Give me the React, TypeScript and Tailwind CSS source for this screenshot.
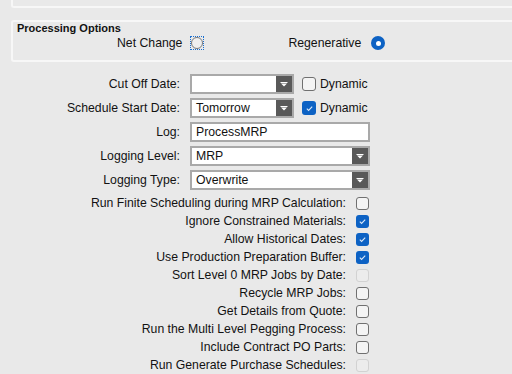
import React from "react";

const ink = "text-[#121212]";

function Caret() {
  return (
    <svg width="8" height="5" viewBox="0 0 8 5">
      <rect x="0.5" y="0" width="7" height="1" fill="#fff" />
      <polygon points="1,1.5 7,1.5 4,4.5" fill="#fff" />
    </svg>
  );
}

function Check({ checked, disabled, size = 13 }: { checked?: boolean; disabled?: boolean; size?: number }) {
  if (checked) {
    return (
      <span
        className="flex items-center justify-center rounded-[3px] bg-[#0d62c4]"
        style={{ width: size, height: size }}
      >
        <svg width="9" height="9" viewBox="0 0 9 9">
          <path d="M1.8 4.6 L3.6 6.4 L7.2 2.6" stroke="#dbe8f8" strokeWidth="1.1" fill="none" />
        </svg>
      </span>
    );
  }
  return (
    <span
      className={
        disabled
          ? "block rounded-[3px] border border-[#d2d2d2] bg-[#ececec]"
          : "block rounded-[3px] border-[1.5px] border-[#707070] bg-[#f4f4f4]"
      }
      style={{ width: size, height: size }}
    />
  );
}

function Select({ value, width }: { value: string; width: number }) {
  return (
    <div
      className="flex h-[20px] items-stretch border-2 border-[#a9a9a9] bg-white"
      style={{ width }}
    >
      <span className="flex-1 pl-[4px] leading-[16px]">{value}</span>
      <span className="flex w-[16px] items-center justify-center bg-[#595959]">
        <Caret />
      </span>
    </div>
  );
}

const checks: { label: string; checked?: boolean; disabled?: boolean }[] = [
  { label: "Run Finite Scheduling during MRP Calculation:" },
  { label: "Ignore Constrained Materials:", checked: true },
  { label: "Allow Historical Dates:", checked: true },
  { label: "Use Production Preparation Buffer:", checked: true },
  { label: "Sort Level 0 MRP Jobs by Date:", disabled: true },
  { label: "Recycle MRP Jobs:" },
  { label: "Get Details from Quote:" },
  { label: "Run the Multi Level Pegging Process:" },
  { label: "Include Contract PO Parts:" },
  { label: "Run Generate Purchase Schedules:", disabled: true },
];

export default function App() {
  return (
    <div
      className={`h-[374px] w-[512px] overflow-hidden bg-[#e9e9e9] ${ink}`}
      style={{ fontFamily: '"Liberation Sans", Arial, sans-serif' }}
    >
      {/* panel above, only its bottom edge shows */}
      <div className="ml-[11px] h-[8px] w-[520px] rounded-bl-[3px] border-b-2 border-l-2 border-[#f7f7f7]" />

      {/* Processing Options */}
      <div className="ml-[11px] mt-[12px] h-[42px] w-[520px] rounded-[3px] border-2 border-[#f7f7f7]">
        <div className="-mt-[1px] pl-[4px] text-[11px] font-bold leading-[14px]">Processing Options</div>
        <div className="flex h-[16px] items-center text-[12.25px]">
          <span className="ml-[104px]">Net Change</span>
          <span className="ml-[8px] flex h-[14px] w-[14px] items-center justify-center border border-dotted border-[#1a6fd0]">
            <span className="block h-[12px] w-[12px] rounded-full border-[1.5px] border-[#7a7a7a] bg-[#efefef]" />
          </span>
          <span className="ml-[84px]">Regenerative</span>
          <span className="ml-[10px] flex h-[14px] w-[14px] items-center justify-center rounded-full bg-[#0d62c4]">
            <span className="block h-[5px] w-[5px] rounded-full bg-white" />
          </span>
        </div>
      </div>

      {/* fields */}
      <div className="mt-[10px] text-[12.25px]">
        <div className="flex h-[24px] items-center">
          <span className="w-[180px] text-right">Cut Off Date:</span>
          <div className="ml-[10px]">
            <Select value="" width={104} />
          </div>
          <span className="ml-[8px]">
            <Check size={14} />
          </span>
          <span className="ml-[4px]">Dynamic</span>
        </div>
        <div className="flex h-[24px] items-center">
          <span className="w-[180px] whitespace-nowrap text-right">Schedule Start Date:</span>
          <div className="ml-[10px]">
            <Select value="Tomorrow" width={104} />
          </div>
          <span className="ml-[8px]">
            <Check size={14} checked />
          </span>
          <span className="ml-[4px]">Dynamic</span>
        </div>
        <div className="flex h-[24px] items-center">
          <span className="w-[180px] text-right">Log:</span>
          <div className="ml-[10px] h-[20px] w-[180px] border-2 border-[#a9a9a9] bg-white pl-[4px] leading-[16px]">
            ProcessMRP
          </div>
        </div>
        <div className="flex h-[24px] items-center">
          <span className="w-[180px] text-right">Logging Level:</span>
          <div className="ml-[10px]">
            <Select value="MRP" width={180} />
          </div>
        </div>
        <div className="flex h-[24px] items-center">
          <span className="w-[180px] text-right">Logging Type:</span>
          <div className="ml-[10px]">
            <Select value="Overwrite" width={180} />
          </div>
        </div>

        <div className="mt-[2px]">
          {checks.map((c) => (
            <div key={c.label} className="flex h-[18px] items-center">
              <span className="w-[346px] whitespace-nowrap text-right">{c.label}</span>
              <span className="ml-[10px]">
                <Check checked={c.checked} disabled={c.disabled} />
              </span>
            </div>
          ))}
        </div>
      </div>
    </div>
  );
}
